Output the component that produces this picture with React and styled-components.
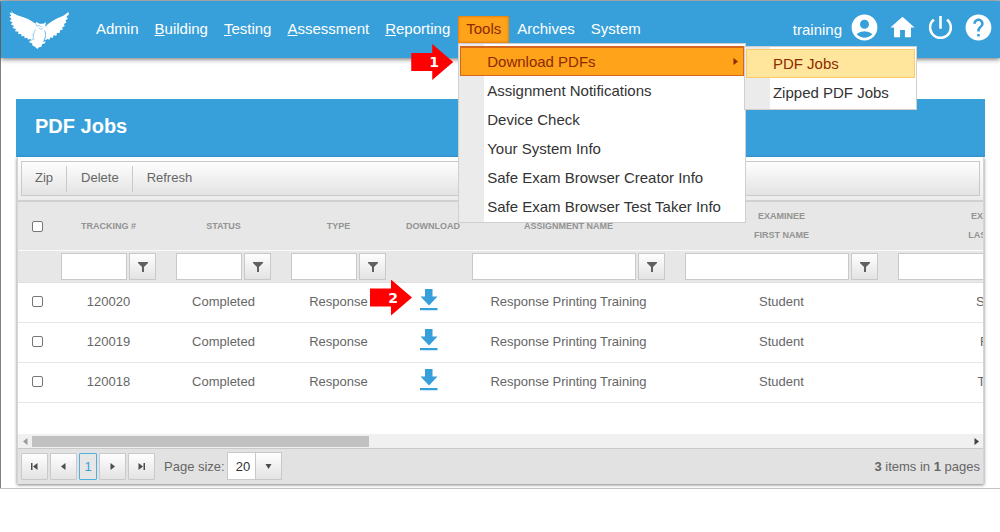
import { useState } from 'react'
import styled, { createGlobalStyle, css } from 'styled-components'
import { MdAccountCircle, MdHome, MdPowerSettingsNew, MdHelp } from 'react-icons/md'

const navItems = [
    { label: 'Admin' },
    { label: 'Building', hotkey: true },
    { label: 'Testing', hotkey: true },
    { label: 'Assessment', hotkey: true },
    { label: 'Reporting', hotkey: true },
    { label: 'Tools', open: true },
    { label: 'Archives' },
    { label: 'System' },
]

const toolsMenu = [
    'Assignment Notifications',
    'Device Check',
    'Your System Info',
    'Safe Exam Browser Creator Info',
    'Safe Exam Browser Test Taker Info',
]

const columns = [
    { title: ['Tracking #'], width: 115, filter: true },
    { title: ['Status'], width: 115, filter: true },
    { title: ['Type'], width: 115, filter: true },
    { title: ['Download'], width: 66 },
    { title: ['Assignment Name'], width: 213, filter: true },
    { title: ['Examinee', 'First Name'], width: 213, filter: true },
    { title: ['Examinee', 'Last Name'], width: 213, filter: true },
]

const jobs = [
    { id: '120020', first: 'Student', last: 'Seven', step: '2' },
    { id: '120019', first: 'Student', last: 'Faye' },
    { id: '120018', first: 'Student', last: 'Three' },
]

const Owl = () => (
    <svg width="60" height="40" viewBox="27 30 180 120" aria-hidden="true">
        <path
            fill="#fff"
            d="M33 32L40 40L52 46L68 51L84 57L98 65L109 73L108 82L102 92L97 104L97 121L90 117L84 119L82 113L74 115L73 108L64 109L64 102L54 102L56 95L45 94L48 87L37 84L42 78L32 73L38 68L29 62L35 57L28 50L34 47L28 38L36 39Z"
        />
        <path
            fill="#fff"
            d="M205 36L190 47L172 55L156 64L143 73L136 81L134 90L138 102L135 121L143 117L148 119L151 112L158 114L161 106L169 107L171 99L179 99L180 91L188 89L187 82L194 79L192 72L200 67L196 62L204 55L199 51L207 43Z"
        />
        <path
            fill="#fff"
            d="M109 66l10 5h10l9-4-2 9 2 10-4 7 3 12-3 13-5 8 8-2-2 6-8 2-3 8-7 2-5 5-7-7-7-3-2-7-9-3 3-5 8-2-2-10 3-14 5-10-1-10z"
        />
        <path
            fill="none"
            stroke="#6cb8e3"
            strokeWidth="2"
            d="M108 72l3 7 6-3 5 4M117 83c2 6 9 6 13 0M124 79l3 1M108 88c-8 8-9 21-6 33M134 92c4 10 3 20-2 28"
        />
    </svg>
)

const Funnel = () => (
    <svg width="10" height="10" viewBox="0 0 10 10" aria-hidden="true">
        <path fill="#606060" d="M0 0h10v1L6 5v5H4V5L0 1z" />
    </svg>
)

const DownloadIcon = () => (
    <svg width="18" height="22" viewBox="0 0 18 22" aria-hidden="true">
        <path fill="#379fd9" d="M5 0h7.500v7.500h5L9 16.500 0.500 7.500H5zM0 19h17.500v2.200H0z" />
    </svg>
)

const pagerShapes = {
    first: 'M0 0h1.500v7H0zM6.500 0v7L2 3.500z',
    prev: 'M5.500 0v7L1 3.500z',
    next: 'M1.500 0v7L6 3.500z',
    last: 'M0.500 0v7L5 3.500zM5.500 0H7v7H5.500z',
    down: 'M0.500 1h6l-3 5z',
}

const Glyph = ({ shape, color = '#4c4c4c' }) => (
    <svg width="7" height="7" viewBox="0 0 7 7" aria-hidden="true">
        <path fill={color} d={pagerShapes[shape]} />
    </svg>
)

const App = () => {
    const [checked, setChecked] = useState({})

    const toggleAll = (e) => {
        const next = {}
        jobs.forEach(job => { next[job.id] = e.target.checked })
        setChecked(next)
    }

    return (<>
        <GlobalStyle />
        <Shell>
            <Header>
                <LogoLink href="#home" aria-label="Home"><Owl /></LogoLink>
                <Nav>
                    {navItems.map(item => (
                        <NavItem key={item.label}>
                            <NavLink href={'#' + item.label} $open={item.open}>
                                {item.hotkey ? <><u>{item.label[0]}</u>{item.label.slice(1)}</> : item.label}
                            </NavLink>
                            {item.open && <>
                                <Menu>
                                    <MenuItem>
                                        <MenuLink href="#download" $tone="active">
                                            Download PDFs
                                            <Glyph shape="next" color="#8c2a00" />
                                        </MenuLink>
                                        <SubMenu>
                                            <MenuItem><MenuLink href="#jobs" $tone="hover">PDF Jobs</MenuLink></MenuItem>
                                            <MenuItem><MenuLink href="#zipped">Zipped PDF Jobs</MenuLink></MenuItem>
                                        </SubMenu>
                                    </MenuItem>
                                    {toolsMenu.map(label => (
                                        <MenuItem key={label}><MenuLink href="#tools">{label}</MenuLink></MenuItem>
                                    ))}
                                </Menu>
                                <MenuStep>1</MenuStep>
                            </>}
                        </NavItem>
                    ))}
                </Nav>
                <UserArea>
                    <UserName>training</UserName>
                    <IconButton aria-label="Account"><MdAccountCircle size={31} /></IconButton>
                    <IconButton aria-label="Home"><MdHome size={29} /></IconButton>
                    <IconButton aria-label="Log out"><MdPowerSettingsNew size={31} /></IconButton>
                    <IconButton aria-label="Help"><MdHelp size={31} /></IconButton>
                </UserArea>
            </Header>

            <Main>
                <Title>PDF Jobs</Title>
                <Grid>
                    <ToolbarArea>
                        <Toolbar>
                            <ToolButton>Zip</ToolButton>
                            <Divider />
                            <ToolButton>Delete</ToolButton>
                            <Divider />
                            <ToolButton>Refresh</ToolButton>
                        </Toolbar>
                    </ToolbarArea>

                    <Scroller>
                        <Table>
                            <colgroup>
                                <Col $width={33} />
                                {columns.map((col, i) => <Col key={i} $width={col.width} />)}
                            </colgroup>
                            <thead>
                                <tr>
                                    <HeadCell $check><Check type="checkbox" aria-label="Select all" onChange={toggleAll} /></HeadCell>
                                    {columns.map((col, i) => (
                                        <HeadCell key={i}>
                                            {col.title.map(line => <HeadLine key={line}>{line}</HeadLine>)}
                                        </HeadCell>
                                    ))}
                                </tr>
                                <tr>
                                    <FilterCell />
                                    {columns.map((col, i) => (
                                        <FilterCell key={i}>
                                            {col.filter && <Filter>
                                                <FilterInput aria-label={'Filter ' + col.title.join(' ')} />
                                                <FilterButton aria-label="Filter"><Funnel /></FilterButton>
                                            </Filter>}
                                        </FilterCell>
                                    ))}
                                </tr>
                            </thead>
                            <tbody>
                                {jobs.map(job => (
                                    <tr key={job.id}>
                                        <Cell $check>
                                            <Check
                                                type="checkbox"
                                                aria-label={'Select ' + job.id}
                                                checked={!!checked[job.id]}
                                                onChange={e => setChecked({ ...checked, [job.id]: e.target.checked })}
                                            />
                                        </Cell>
                                        <Cell>{job.id}</Cell>
                                        <Cell>Completed</Cell>
                                        <Cell>Response</Cell>
                                        <Cell>
                                            <DownloadLink href="#file" aria-label={'Download ' + job.id}>
                                                <DownloadIcon />
                                                {job.step && <RowStep>{job.step}</RowStep>}
                                            </DownloadLink>
                                        </Cell>
                                        <Cell>Response Printing Training</Cell>
                                        <Cell>{job.first}</Cell>
                                        <Cell>{job.last}</Cell>
                                    </tr>
                                ))}
                            </tbody>
                        </Table>
                    </Scroller>

                    <ScrollBar>
                        <ScrollArrow><Glyph shape="prev" color="#9a9a9a" /></ScrollArrow>
                        <Track><Thumb /></Track>
                        <ScrollArrow><Glyph shape="next" color="#404040" /></ScrollArrow>
                    </ScrollBar>

                    <Footer>
                        <Pager>
                            <PageButton aria-label="First page"><Glyph shape="first" /></PageButton>
                            <PageButton aria-label="Previous page"><Glyph shape="prev" /></PageButton>
                            <PageButton $current>1</PageButton>
                            <PageButton aria-label="Next page"><Glyph shape="next" /></PageButton>
                            <PageButton aria-label="Last page"><Glyph shape="last" /></PageButton>
                        </Pager>
                        <label htmlFor="pageSize">Page size:</label>
                        <SelectBox>
                            <Select id="pageSize" defaultValue="20">
                                <option>10</option>
                                <option>20</option>
                                <option>50</option>
                            </Select>
                            <SelectArrow><Glyph shape="down" /></SelectArrow>
                        </SelectBox>
                        <Summary><b>3</b> items in <b>1</b> pages</Summary>
                    </Footer>
                </Grid>
            </Main>
        </Shell>
    </>)
}

const GlobalStyle = createGlobalStyle`
  * {
    box-sizing: border-box;
  }

  body {
    margin: 0;
    background: #fff;
    font-family: "Liberation Sans", Arial, sans-serif;
    font-size: 13px;
    color: #666;
  }

  button, input, select {
    font: inherit;
    color: inherit;
  }

  svg {
    display: block;
  }
`

const bevel = css`
  background: linear-gradient(#fefefe, #e3e3e3);
  border: 1px solid #c9c9c9;
`

const Shell = styled.div`
  border: solid #c4c4c4;
  border-width: 1px 0;
  box-shadow: inset 1px 0 #808080;
  padding-left: 1px;
`

const Header = styled.header`
  display: flex;
  align-items: center;
  height: 57px;
  padding: 0 6px 0 8px;
  background: #379fd9;
  box-shadow: 0 1px 5px rgba(0, 0, 0, 0.6);
`

const LogoLink = styled.a`
  flex: none;
`

const Nav = styled.ul`
  display: flex;
  margin: 0 auto 0 19px;
  padding: 0;
  list-style: none;
  font-size: 15px;
`

const NavItem = styled.li`
  position: relative;
`

const NavLink = styled.a`
  display: block;
  padding: 0 8px 2px;
  line-height: 25px;
  color: #fff;
  text-decoration: none;

  ${p => p.$open && css`
    background: #ffa31a;
    box-shadow: inset 0 0 3px #c85a00;
    color: #8c2a00;
  `}
`

const Menu = styled.ul`
  position: absolute;
  z-index: 2;
  top: 100%;
  left: 0;
  margin: 0;
  padding: 2px 1px 1px;
  border: 1px solid #cfcfcf;
  background: linear-gradient(to right, #ebebeb 25px, #fff 25px);
  list-style: none;
  white-space: nowrap;
`

const SubMenu = styled(Menu)`
  top: 0;
  left: 100%;
  min-width: 173px;
  padding: 2px 1px;
`

const MenuItem = styled.li`
  position: relative;
`

const MenuLink = styled.a`
  display: flex;
  align-items: center;
  justify-content: space-between;
  height: 29px;
  padding: 0 23px 0 27px;
  color: #333;
  text-decoration: none;

  ${p => p.$tone === 'active' && css`
    height: 30px;
    padding: 0 4px 0 26px;
    border: 1px solid #d5651c;
    border-top-width: 2px;
    background: #ffa31a;
    color: #8c2a00;
  `}

  ${p => p.$tone === 'hover' && css`
    padding: 0 22px 0 26px;
    border: 1px solid #ffcb66;
    background: #ffe69c;
    color: #8c2a00;
  `}
`

const StepArrow = styled.span`
  position: absolute;
  z-index: 3;
  display: flex;
  align-items: center;
  justify-content: center;
  width: 42px;
  height: 36px;
  padding-left: 4px;
  background: #f00;
  clip-path: polygon(0 25%, 50% 25%, 50% 0, 100% 50%, 50% 100%, 50% 75%, 0 75%);
  color: #fff;
  font-family: "DejaVu Sans", sans-serif;
  font-weight: bold;
  font-size: 14px;
`

const MenuStep = styled(StepArrow)`
  right: 100%;
  top: 28px;
  margin-right: 5px;
`

const RowStep = styled(StepArrow)`
  right: 100%;
  top: -9px;
  margin-right: 8px;
`

const UserArea = styled.div`
  display: flex;
  align-items: center;
  gap: 7px;
  padding-bottom: 4px;
  color: #fff;
`

const UserName = styled.span`
  padding-top: 4px;
  font-size: 15px;
`

const IconButton = styled.button`
  display: flex;
  align-items: center;
  justify-content: center;
  width: 31px;
  height: 31px;
  padding: 0;
  border: 0;
  background: none;
`

const Main = styled.main`
  padding: 41px 15px 4px 15px;
`

const Title = styled.h1`
  margin: 0;
  padding: 0 19px 4px;
  background: #379fd9;
  color: #fff;
  font-size: 20px;
  line-height: 54px;
`

const Grid = styled.section`
  margin: 0 1px;
  border: solid #d4d4d4;
  border-width: 0 1px;
  box-shadow: 0 1px 3px rgba(0, 0, 0, 0.5);
`

const ToolbarArea = styled.div`
  padding: 4px 3px;
  background: linear-gradient(#fff, #ececec);
  border-bottom: 2px solid #d0d0d0;
`

const Toolbar = styled.div`
  ${bevel}
  display: flex;
  align-items: center;
  height: 35px;
`

const ToolButton = styled.button`
  padding: 0 13px 2px;
  border: 0;
  background: none;
`

const Divider = styled.span`
  width: 1px;
  height: 26px;
  margin-right: 1px;
  background: #c9c9c9;
`

const Scroller = styled.div`
  overflow: hidden;
  padding-bottom: 31px;
  background: #fff;
`

const Table = styled.table`
  width: 1083px;
  table-layout: fixed;
  border-collapse: separate;
  border-spacing: 0;
`

const Col = styled.col`
  width: ${p => p.$width}px;
`

const HeadCell = styled.th`
  height: 49px;
  padding: 0 ${p => p.$check ? '0 0 6px' : '10px'};
  background: #e7e7e7;
  border-bottom: 1px solid #fafafa;
  color: #939393;
  font-size: 9px;
  line-height: 19px;
  text-transform: uppercase;
`

const HeadLine = styled.div`
  white-space: nowrap;
`

const FilterCell = styled.td`
  height: 32px;
  padding: 0 10px;
  background: #e7e7e7;
  border-bottom: 1px solid #e0e0e0;
`

const Filter = styled.div`
  display: flex;
  gap: 2px;
`

const FilterInput = styled.input`
  flex: 1;
  min-width: 0;
  height: 27px;
  border: 1px solid #c9c9c9;
  background: #fff;
`

const FilterButton = styled.button`
  ${bevel}
  display: flex;
  align-items: center;
  justify-content: center;
  width: 27px;
  padding: 0;
`

const Cell = styled.td`
  height: 40px;
  padding: 0 0 2px ${p => p.$check ? '6px' : '0'};
  border-bottom: 1px solid #e6e6e6;
  text-align: center;
`

const Check = styled.input`
  display: block;
  width: 11px;
  height: 11px;
  margin: 0 auto;
  appearance: none;
  border: 1px solid #767676;
  border-radius: 2px;
  background: #fff;

  &:checked {
    background: #379fd9;
  }
`

const DownloadLink = styled.a`
  position: relative;
  display: block;
  width: 18px;
  margin: 0 auto;
  padding-bottom: 4px;
`

const ScrollBar = styled.div`
  display: flex;
  height: 14px;
  background: #f0f0f0;
`

const ScrollArrow = styled.span`
  display: flex;
  align-items: center;
  justify-content: center;
  width: 14px;
`

const Track = styled.div`
  flex: 1;
  padding: 2px 0 1px;
`

const Thumb = styled.div`
  width: 36%;
  height: 100%;
  background: #c1c1c1;
`

const Footer = styled.footer`
  display: flex;
  align-items: center;
  height: 36px;
  padding: 0 3px 1px;
  border-top: 1px solid #c9c9c9;
  background: #e2e2e2;
`

const Pager = styled.div`
  display: flex;
  gap: 2px;
  margin-right: 9px;
`

const PageButton = styled.button`
  ${bevel}
  display: flex;
  align-items: center;
  justify-content: center;
  width: 27px;
  height: 27px;
  padding: 0;
  border-radius: 1px;

  ${p => p.$current && css`
    width: 18px;
    border-color: #4fb0e0;
    background: #e6e6e6;
    color: #379fd9;
  `}
`

const SelectBox = styled.div`
  position: relative;
  margin-left: 2px;
`

const Select = styled.select`
  display: block;
  width: 55px;
  height: 28px;
  padding: 0 8px;
  appearance: none;
  border: 1px solid #c9c9c9;
  border-radius: 0;
  background: #fff;
  color: #333;
`

const SelectArrow = styled.span`
  ${bevel}
  position: absolute;
  inset: 0 0 0 auto;
  display: flex;
  align-items: center;
  justify-content: center;
  width: 27px;
  pointer-events: none;
`

const Summary = styled.span`
  margin-left: auto;
`

export default App
